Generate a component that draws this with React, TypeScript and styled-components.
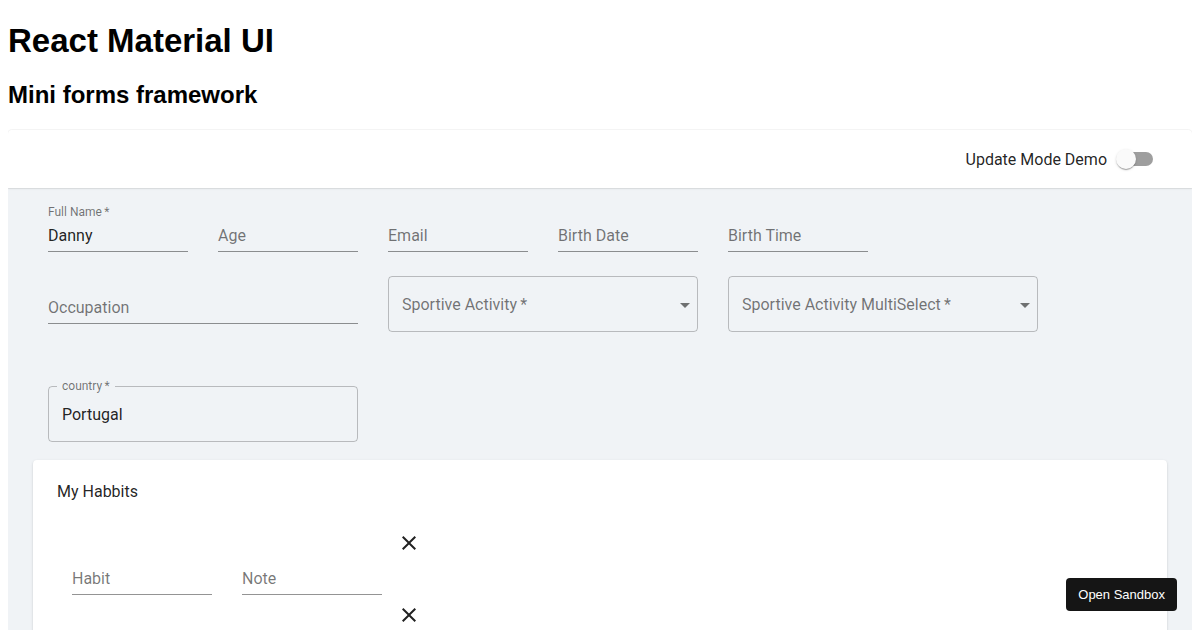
import React from "react";
import styled, { createGlobalStyle } from "styled-components";

const GlobalStyle = createGlobalStyle`
  body {
    margin: 8px;
    background: #fff;
    font-family: "Liberation Sans", Arial, sans-serif;
    color: #000;
  }
`;

const PageTitle = styled.h1`
  font-size: 33px;
  font-weight: 700;
  margin: 14px 0 21px;
`;

const PageSubtitle = styled.h2`
  font-size: 24px;
  font-weight: 700;
  margin: 20px 0 21px;
`;

const Panel = styled.div`
  display: flex;
  flex-direction: column;
  font-family: Roboto, "Liberation Sans", sans-serif;
`;

const TopBar = styled.div`
  height: 58px;
  background: #fff;
  border-radius: 4px 4px 0 0;
  box-shadow: 0px 0px 0px 1px rgba(0, 0, 0, 0.04), 0px 1px 2px 0px rgba(0, 0, 0, 0.08);
  display: flex;
  align-items: center;
  justify-content: flex-end;
  padding-right: 27px;
  position: relative;
  z-index: 1;
`;

const SwitchText = styled.span`
  font-size: 16px;
  color: rgba(0, 0, 0, 0.87);
`;

const SwitchRoot = styled.span`
  width: 58px;
  height: 38px;
  padding: 12px;
  box-sizing: border-box;
  position: relative;
  display: inline-flex;
`;

const SwitchTrack = styled.span`
  width: 34px;
  height: 14px;
  border-radius: 7px;
  background: #000;
  opacity: 0.38;
`;

const SwitchThumb = styled.span`
  position: absolute;
  top: 9px;
  left: 9px;
  width: 20px;
  height: 20px;
  border-radius: 50%;
  background: #fafafa;
  box-shadow: 0px 2px 1px -1px rgba(0, 0, 0, 0.2), 0px 1px 1px 0px rgba(0, 0, 0, 0.14),
    0px 1px 3px 0px rgba(0, 0, 0, 0.12);
`;

const FormArea = styled.div`
  background: #f0f3f6;
  padding: 16px 40px 0;
  min-height: 460px;
`;

const FieldRow = styled.div<{ $mb: number }>`
  display: flex;
  align-items: flex-start;
  gap: 30px;
  margin-bottom: ${(p) => p.$mb}px;
`;

const FieldControl = styled.div<{ $width: number }>`
  width: ${(p) => p.$width}px;
  display: flex;
  flex-direction: column;
`;

const ShrinkLabel = styled.div`
  height: 16px;
  font-size: 12px;
  line-height: 16px;
  color: rgba(0, 0, 0, 0.54);
`;

const InputBox = styled.div<{ $empty?: boolean }>`
  height: 32px;
  box-sizing: border-box;
  padding: 6px 0 7px;
  font-size: 16px;
  line-height: 19px;
  color: ${(p) => (p.$empty ? "rgba(0, 0, 0, 0.54)" : "rgba(0, 0, 0, 0.87)")};
  border-bottom: 1px solid rgba(0, 0, 0, 0.42);
`;

const OutlinedBox = styled.div<{ $width: number; $empty?: boolean }>`
  position: relative;
  width: ${(p) => p.$width}px;
  height: 56px;
  box-sizing: border-box;
  border: 1px solid rgba(0, 0, 0, 0.23);
  border-radius: 4px;
  padding: 0 13px;
  display: flex;
  align-items: center;
  font-size: 16px;
  color: ${(p) => (p.$empty ? "rgba(0, 0, 0, 0.54)" : "rgba(0, 0, 0, 0.87)")};
`;

const NotchLabel = styled.span`
  position: absolute;
  top: -8px;
  left: 8px;
  padding: 0 5px;
  font-size: 12px;
  line-height: 14px;
  background: #f0f3f6;
  color: rgba(0, 0, 0, 0.54);
`;

const DropArrow = styled.svg`
  position: absolute;
  right: 0px;
  top: 16px;
  width: 24px;
  height: 24px;
  fill: rgba(0, 0, 0, 0.54);
`;

const HabitsCard = styled.div`
  margin: 0 -15px;
  background: #fff;
  border-radius: 4px;
  padding: 20px 24px 24px;
  min-height: 200px;
  box-shadow: 0px 2px 1px -1px rgba(0, 0, 0, 0.2), 0px 1px 1px 0px rgba(0, 0, 0, 0.14),
    0px 1px 3px 0px rgba(0, 0, 0, 0.12);
`;

const CardTitle = styled.div`
  font-size: 16px;
  line-height: 24px;
  color: rgba(0, 0, 0, 0.87);
  margin-bottom: 27px;
`;

const HabitItem = styled.div`
  width: 349px;
  padding-left: 15px;
  margin-bottom: 8px;
  display: flex;
  flex-direction: column;
`;

const HabitHeader = styled.div`
  height: 16px;
  display: flex;
  justify-content: flex-end;
  align-items: flex-start;
`;

const CloseIcon = styled.svg`
  width: 24px;
  height: 24px;
  flex-shrink: 0;
  fill: rgba(0, 0, 0, 0.87);
  position: relative;
  z-index: 1;
`;

const SandboxButton = styled.button`
  position: fixed;
  right: 23px;
  bottom: 19px;
  height: 33px;
  padding: 0 12px;
  border: none;
  border-radius: 4px;
  background: #151515;
  color: #fff;
  font-family: "Liberation Sans", Arial, sans-serif;
  font-size: 13px;
`;

type FieldProps = { label: string; value?: string; width?: number; required?: boolean };

const StandardField: React.FC<FieldProps> = ({ label, value, width = 140, required }) => (
  <FieldControl $width={width}>
    <ShrinkLabel>{value ? `${label}${required ? "\u2009*" : ""}` : ""}</ShrinkLabel>
    <InputBox $empty={!value}>{value || label}</InputBox>
  </FieldControl>
);

const SelectField: React.FC<{ label: string }> = ({ label }) => (
  <OutlinedBox $width={310} $empty>
    {label}
    {"\u2009*"}
    <DropArrow viewBox="0 0 24 24">
      <path d="M7 10l5 5 5-5z" />
    </DropArrow>
  </OutlinedBox>
);

const Close = () => (
  <CloseIcon viewBox="0 0 24 24">
    <path d="M19 6.41L17.59 5 12 10.59 6.41 5 5 6.41 10.59 12 5 17.59 6.41 19 12 13.41 17.59 19 19 17.59 13.41 12z" />
  </CloseIcon>
);

const App: React.FC = () => {
  const habits = [0, 1];

  return (
    <>
      <GlobalStyle />
      <PageTitle>React Material UI</PageTitle>
      <PageSubtitle>Mini forms framework</PageSubtitle>
      <Panel>
        <TopBar>
          <SwitchText>Update Mode Demo</SwitchText>
          <SwitchRoot>
            <SwitchTrack />
            <SwitchThumb />
          </SwitchRoot>
        </TopBar>
        <FormArea>
          <FieldRow $mb={24}>
            <StandardField label="Full Name" value="Danny" required />
            <StandardField label="Age" />
            <StandardField label="Email" />
            <StandardField label="Birth Date" />
            <StandardField label="Birth Time" />
          </FieldRow>
          <FieldRow $mb={54}>
            <StandardField label="Occupation" width={310} />
            <SelectField label="Sportive Activity" />
            <SelectField label="Sportive Activity MultiSelect" />
          </FieldRow>
          <FieldRow $mb={18}>
            <OutlinedBox $width={310}>
              <NotchLabel>country{"\u2009*"}</NotchLabel>
              Portugal
            </OutlinedBox>
          </FieldRow>
          <HabitsCard>
            <CardTitle>My Habbits</CardTitle>
            {habits.map((h) => (
              <HabitItem key={h}>
                <HabitHeader>
                  <Close />
                </HabitHeader>
                <FieldRow $mb={0}>
                  <StandardField label="Habit" />
                  <StandardField label="Note" />
                </FieldRow>
              </HabitItem>
            ))}
          </HabitsCard>
        </FormArea>
      </Panel>
      <SandboxButton>Open Sandbox</SandboxButton>
    </>
  );
};

export default App;
